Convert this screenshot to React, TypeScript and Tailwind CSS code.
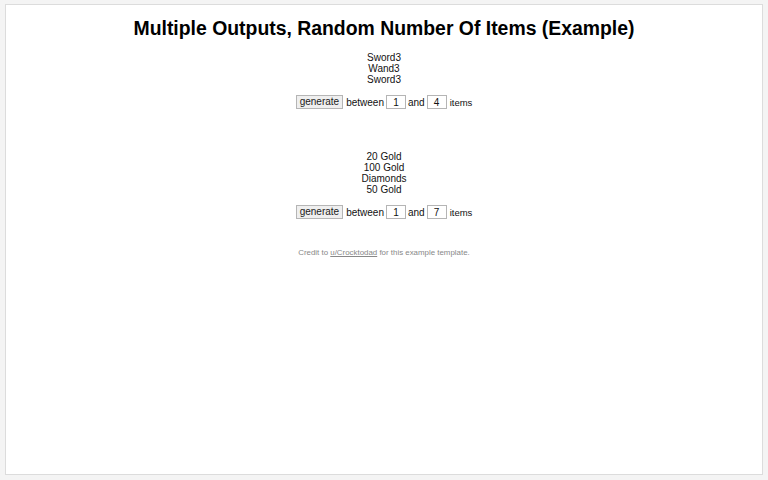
import React from "react";

function Controls({ max }: { max: string }) {
  return (
    <div className="flex items-center justify-center gap-[2px] mt-[10px] h-[14px]">
      <button className="h-[14px] px-[3px] bg-[#efefef] border border-[#b5b5b5] text-[10px] leading-[12px] text-[#222] mr-[1px]">generate</button>
      <span>between</span>
      <input readOnly value="1" className="w-[20px] h-[14px] border border-[#b5b5b5] text-center text-[10px] leading-[12px] bg-white" />
      <span>and</span>
      <input readOnly value={max} className="w-[20px] h-[14px] border border-[#b5b5b5] text-center text-[10px] leading-[12px] bg-white" />
      <span className="ml-[1px] text-[9.5px]">items</span>
    </div>
  );
}

export default function App() {
  return (
    <div className="w-[768px] h-[480px] bg-[#f4f4f4] pt-[4px] px-[5px] pb-[5px]" style={{ fontFamily: '"Liberation Sans", Arial, sans-serif' }}>
      <div className="h-[471px] bg-white border border-[#dcdcdc] flex flex-col items-center text-[10px] leading-[11px] text-[#111]">
        <h1 className="mt-[12px] text-[19.4px] leading-[23px] font-bold text-black">Multiple Outputs, Random Number Of Items (Example)</h1>
        <div className="mt-[12px] flex flex-col items-center">
          <div>Sword3</div>
          <div>Wand3</div>
          <div>Sword3</div>
        </div>
        <Controls max="4" />
        <div className="mt-[42px] flex flex-col items-center">
          <div>20 Gold</div>
          <div>100 Gold</div>
          <div>Diamonds</div>
          <div>50 Gold</div>
        </div>
        <Controls max="7" />
        <div className="mt-[29px] text-[7.9px] leading-[10px] text-[#888]">
          Credit to <span className="underline">u/Crocktodad</span> for this example template.
        </div>
      </div>
    </div>
  );
}
